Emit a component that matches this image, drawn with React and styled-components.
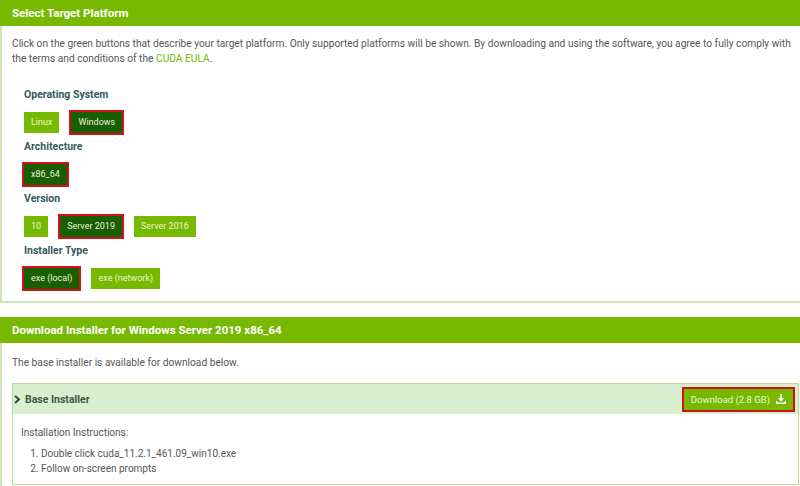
import React from 'react';
import styled, { createGlobalStyle } from 'styled-components';

const GlobalStyle = createGlobalStyle`
  html, body {
    margin: 0;
    padding: 0;
    background: #fff;
  }
  body {
    font-family: Roboto, "Liberation Sans", sans-serif;
    color: #555;
    width: 800px;
    height: 486px;
    overflow: hidden;
  }
`;

const platformGroups = [
  { label: 'Operating System', options: [{ name: 'Linux' }, { name: 'Windows', selected: true }] },
  { label: 'Architecture', options: [{ name: 'x86_64', selected: true }] },
  {
    label: 'Version',
    options: [{ name: '10' }, { name: 'Server 2019', selected: true }, { name: 'Server 2016' }],
  },
  {
    label: 'Installer Type',
    options: [{ name: 'exe (local)', selected: true }, { name: 'exe (network)' }],
  },
];

const steps = ['Double click cuda_11.2.1_461.09_win10.exe', 'Follow on-screen prompts'];

const DownloadIcon = () => (
  <svg width="10" height="10" viewBox="0 0 10 10" fill="#fff">
    <path d="M4 0h2v4.2h2L5 7.4 2 4.2h2z" />
    <path d="M0 7h1.4v1.6h7.2V7H10v3H0z" />
  </svg>
);

const Chevron = () => (
  <svg width="7" height="9" viewBox="0 0 7 9">
    <path d="M1 1l4 3.5L1 8" fill="none" stroke="#2f4a3a" strokeWidth="2" />
  </svg>
);

const App = () => (
  <>
    <GlobalStyle />
    <Page>
      <Panel>
        <PanelHeader>Select Target Platform</PanelHeader>
        <PanelBody>
          <Intro>
            Click on the green buttons that describe your target platform. Only supported platforms
            will be shown. By downloading and using the software, you agree to fully comply with the
            terms and conditions of the <Link>CUDA EULA</Link>.
          </Intro>
          <Groups>
            {platformGroups.map(group => (
              <Group key={group.label}>
                <GroupLabel>{group.label}</GroupLabel>
                <Options>
                  {group.options.map(opt => (
                    <OptionBtn key={opt.name} $selected={opt.selected}>
                      {opt.name}
                    </OptionBtn>
                  ))}
                </Options>
              </Group>
            ))}
          </Groups>
        </PanelBody>
      </Panel>

      <Panel>
        <PanelHeader>Download Installer for Windows Server 2019 x86_64</PanelHeader>
        <PanelBody>
          <Note>The base installer is available for download below.</Note>
          <InstallerBox>
            <InstallerHeader>
              <InstallerTitle>
                <Chevron />
                Base Installer
              </InstallerTitle>
              <DownloadBtn>
                Download (2.8 GB) <DownloadIcon />
              </DownloadBtn>
            </InstallerHeader>
            <InstallerBody>
              <div>Installation Instructions:</div>
              <Steps>
                {steps.map(step => (
                  <li key={step}>{step}</li>
                ))}
              </Steps>
            </InstallerBody>
          </InstallerBox>
        </PanelBody>
      </Panel>
    </Page>
  </>
);

export default App;

const Page = styled.div`
  display: flex;
  flex-direction: column;
  gap: 14px;
`;

const Panel = styled.section`
  border-left: 2px solid #cfe6b4;
  border-bottom: 2px solid #cfe6b4;
`;

const PanelHeader = styled.h2`
  margin: 0 0 0 -2px;
  background: #76b900;
  color: #fff;
  font-size: 11.5px;
  font-weight: 700;
  height: 26px;
  line-height: 26px;
  padding-left: 12px;
`;

const PanelBody = styled.div`
  padding: 10px 0 12px 10px;
`;

const Intro = styled.p`
  margin: 0;
  font-size: 10.2px;
  line-height: 15px;
  padding-right: 6px;
`;

const Link = styled.span`
  color: #76b900;
`;

const Groups = styled.div`
  display: flex;
  flex-direction: column;
  gap: 7px;
  padding: 22px 0 0 12px;
`;

const Group = styled.div`
  display: flex;
  flex-direction: column;
  gap: 11px;
`;

const GroupLabel = styled.div`
  font-size: 10.5px;
  font-weight: 700;
  color: #355a5e;
`;

const Options = styled.div`
  display: flex;
  gap: 12px;
`;

const OptionBtn = styled.div`
  background: ${p => (p.$selected ? '#195e00' : '#76b900')};
  color: ${p => (p.$selected ? '#e6f2dc' : '#e8f5d6')};
  font-size: 9px;
  height: 21px;
  line-height: 21px;
  padding: 0 7px;
  box-shadow: ${p => (p.$selected ? '0 0 0 2px #d4111b' : 'none')};
`;

const Note = styled.p`
  margin: 2px 0 13px;
  font-size: 10.2px;
  line-height: 15px;
`;

const InstallerBox = styled.div`
  border: 1px solid #b9dc94;
  margin-right: 1px;
`;

const InstallerHeader = styled.div`
  display: flex;
  align-items: center;
  justify-content: space-between;
  background: #d9edcf;
  height: 30px;
  padding: 0 5px 0 1px;
`;

const InstallerTitle = styled.div`
  display: flex;
  align-items: center;
  gap: 4px;
  font-size: 10.5px;
  font-weight: 700;
  color: #3f5a47;
`;

const DownloadBtn = styled.div`
  display: flex;
  align-items: center;
  gap: 6px;
  background: #76b900;
  color: #eaf6dc;
  font-size: 9.5px;
  height: 21px;
  padding: 0 7px;
  box-shadow: 0 0 0 2px #d4111b;
`;

const InstallerBody = styled.div`
  padding: 11px 8px 8px;
  font-size: 10px;
  line-height: 15px;
`;

const Steps = styled.ol`
  margin: 6px 0 0;
  padding-left: 20px;
`;
